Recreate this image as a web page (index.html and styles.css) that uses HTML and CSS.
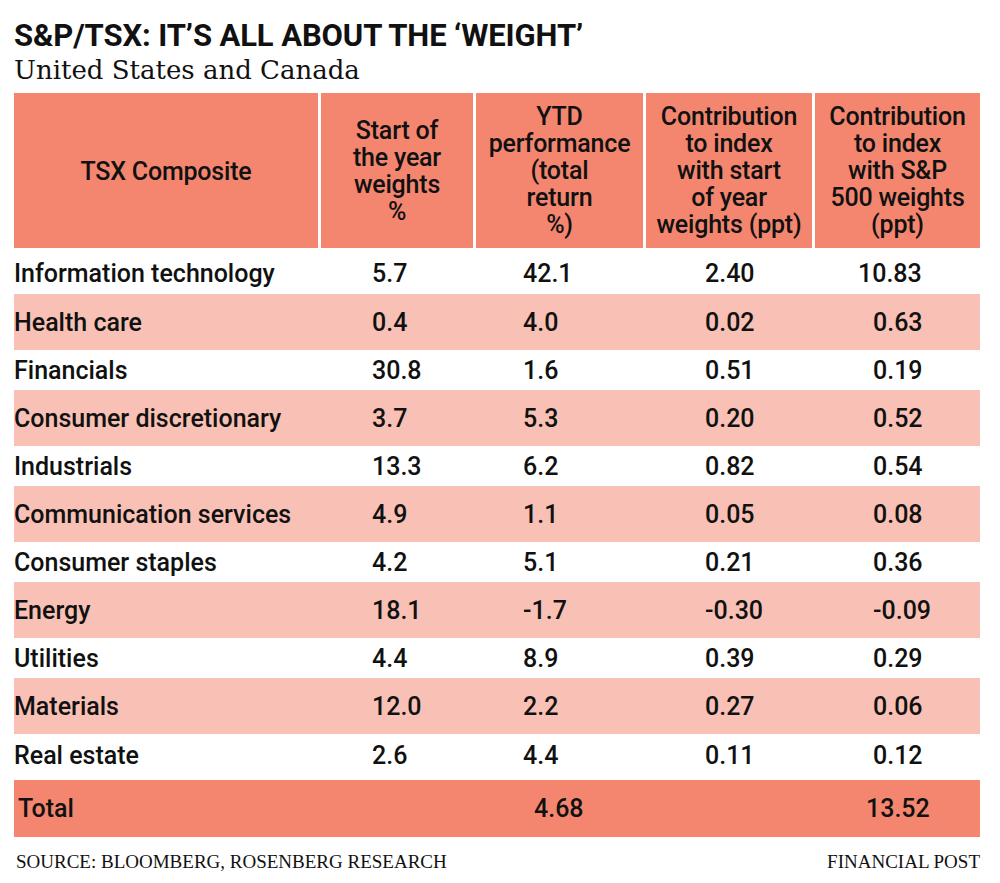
FILE: index.html
```html
<!DOCTYPE html>
<html lang="en">
<head>
<meta charset="utf-8">
<title>S&amp;P/TSX: It's all about the 'weight'</title>
<link rel="stylesheet" href="styles.css">
</head>
<body>
<div class="page">
  <h1 class="title">S&amp;P/TSX: IT’S ALL ABOUT THE ‘WEIGHT’</h1>
  <p class="subtitle">United States and Canada</p>

  <div class="table">
    <div class="head">
      <div class="hcell">TSX Composite</div>
      <div class="hcell">Start of<br>the year<br>weights<br>%</div>
      <div class="hcell">YTD<br>performance<br>(total<br>return<br>%)</div>
      <div class="hcell">Contribution<br>to index<br>with start<br>of year<br>weights (ppt)</div>
      <div class="hcell">Contribution<br>to index<br>with S&amp;P<br>500 weights<br>(ppt)</div>
    </div>

    <div class="row first"><span>Information technology</span><span>5.7</span><span>42.1</span><span>2.40</span><span class="wide">10.83</span></div>
    <div class="row alt"><span>Health care</span><span>0.4</span><span>4.0</span><span>0.02</span><span>0.63</span></div>
    <div class="row"><span>Financials</span><span>30.8</span><span>1.6</span><span>0.51</span><span>0.19</span></div>
    <div class="row alt"><span>Consumer discretionary</span><span>3.7</span><span>5.3</span><span>0.20</span><span>0.52</span></div>
    <div class="row"><span>Industrials</span><span>13.3</span><span>6.2</span><span>0.82</span><span>0.54</span></div>
    <div class="row alt"><span>Communication services</span><span>4.9</span><span>1.1</span><span>0.05</span><span>0.08</span></div>
    <div class="row"><span>Consumer staples</span><span>4.2</span><span>5.1</span><span>0.21</span><span>0.36</span></div>
    <div class="row alt"><span>Energy</span><span>18.1</span><span>-1.7</span><span>-0.30</span><span>-0.09</span></div>
    <div class="row"><span>Utilities</span><span>4.4</span><span>8.9</span><span>0.39</span><span>0.29</span></div>
    <div class="row alt"><span>Materials</span><span>12.0</span><span>2.2</span><span>0.27</span><span>0.06</span></div>
    <div class="row last"><span>Real estate</span><span>2.6</span><span>4.4</span><span>0.11</span><span>0.12</span></div>

    <div class="row total"><span>Total</span><span></span><span class="t3">4.68</span><span></span><span class="t5">13.52</span></div>
  </div>

  <div class="footer">
    <span>SOURCE: BLOOMBERG, ROSENBERG RESEARCH</span>
    <span>FINANCIAL POST</span>
  </div>
</div>
</body>
</html>
```

FILE: styles.css
```css
* { box-sizing: border-box; }

html, body {
  margin: 0;
  padding: 0;
  background: #ffffff;
}

.page {
  width: 1000px;
  padding: 18px 20px 0 14px;
  color: #111111;
  font-family: Roboto, "Liberation Sans", sans-serif;
}

.title {
  margin: 0;
  font-family: Roboto, "Liberation Sans", sans-serif;
  font-weight: 700;
  font-size: 31px;
  line-height: 36px;
  letter-spacing: -0.1px;
  color: #111111;
}

.subtitle {
  margin: 0;
  font-family: "DejaVu Serif", "Liberation Serif", serif;
  font-size: 26px;
  line-height: 32px;
  color: #111111;
}

.table {
  margin-top: 7px;
  width: 966px;
}

.head,
.row {
  display: grid;
  grid-template-columns: 304px 152px 167px 166px 165px;
  column-gap: 3px;
}

.hcell {
  background: #f4866f;
  height: 155px;
  display: flex;
  align-items: center;
  justify-content: center;
  text-align: center;
  font-weight: 500;
  font-size: 25px;
  line-height: 27px;
  letter-spacing: -0.2px;
}

.head .hcell:first-child {
  padding-top: 2px;
}

.row {
  height: 40px;
  align-items: center;
  font-size: 25px;
  font-weight: 500;
  column-gap: 0;
  grid-template-columns: 307px 155px 170px 169px 165px;
}

.row.first {
  height: 46px;
  padding-top: 4px;
}

.row.alt {
  height: 56px;
  background: #f9c1b5;
}

.row.last {
  height: 43px;
}

.row span:nth-child(2) { padding-left: 51px; }
.row span:nth-child(3) { padding-left: 47px; }
.row span:nth-child(4) { padding-left: 59px; }
.row span:nth-child(5) { padding-left: 58px; }
.row span.wide { padding-left: 43px; }

.row.total {
  margin-top: 3px;
  height: 57px;
  background: #f4866f;
  padding-left: 4px;
  grid-template-columns: 303px 155px 170px 169px 165px;
}

.row.total span.t3 { padding-left: 58px; }
.row.total span.t5 { padding-left: 51px; }

.footer {
  width: 966px;
  margin-top: 13px;
  padding-left: 2px;
  display: flex;
  justify-content: space-between;
  font-family: "Liberation Serif", serif;
  font-size: 19px;
  line-height: 24px;
  color: #111111;
}
```
